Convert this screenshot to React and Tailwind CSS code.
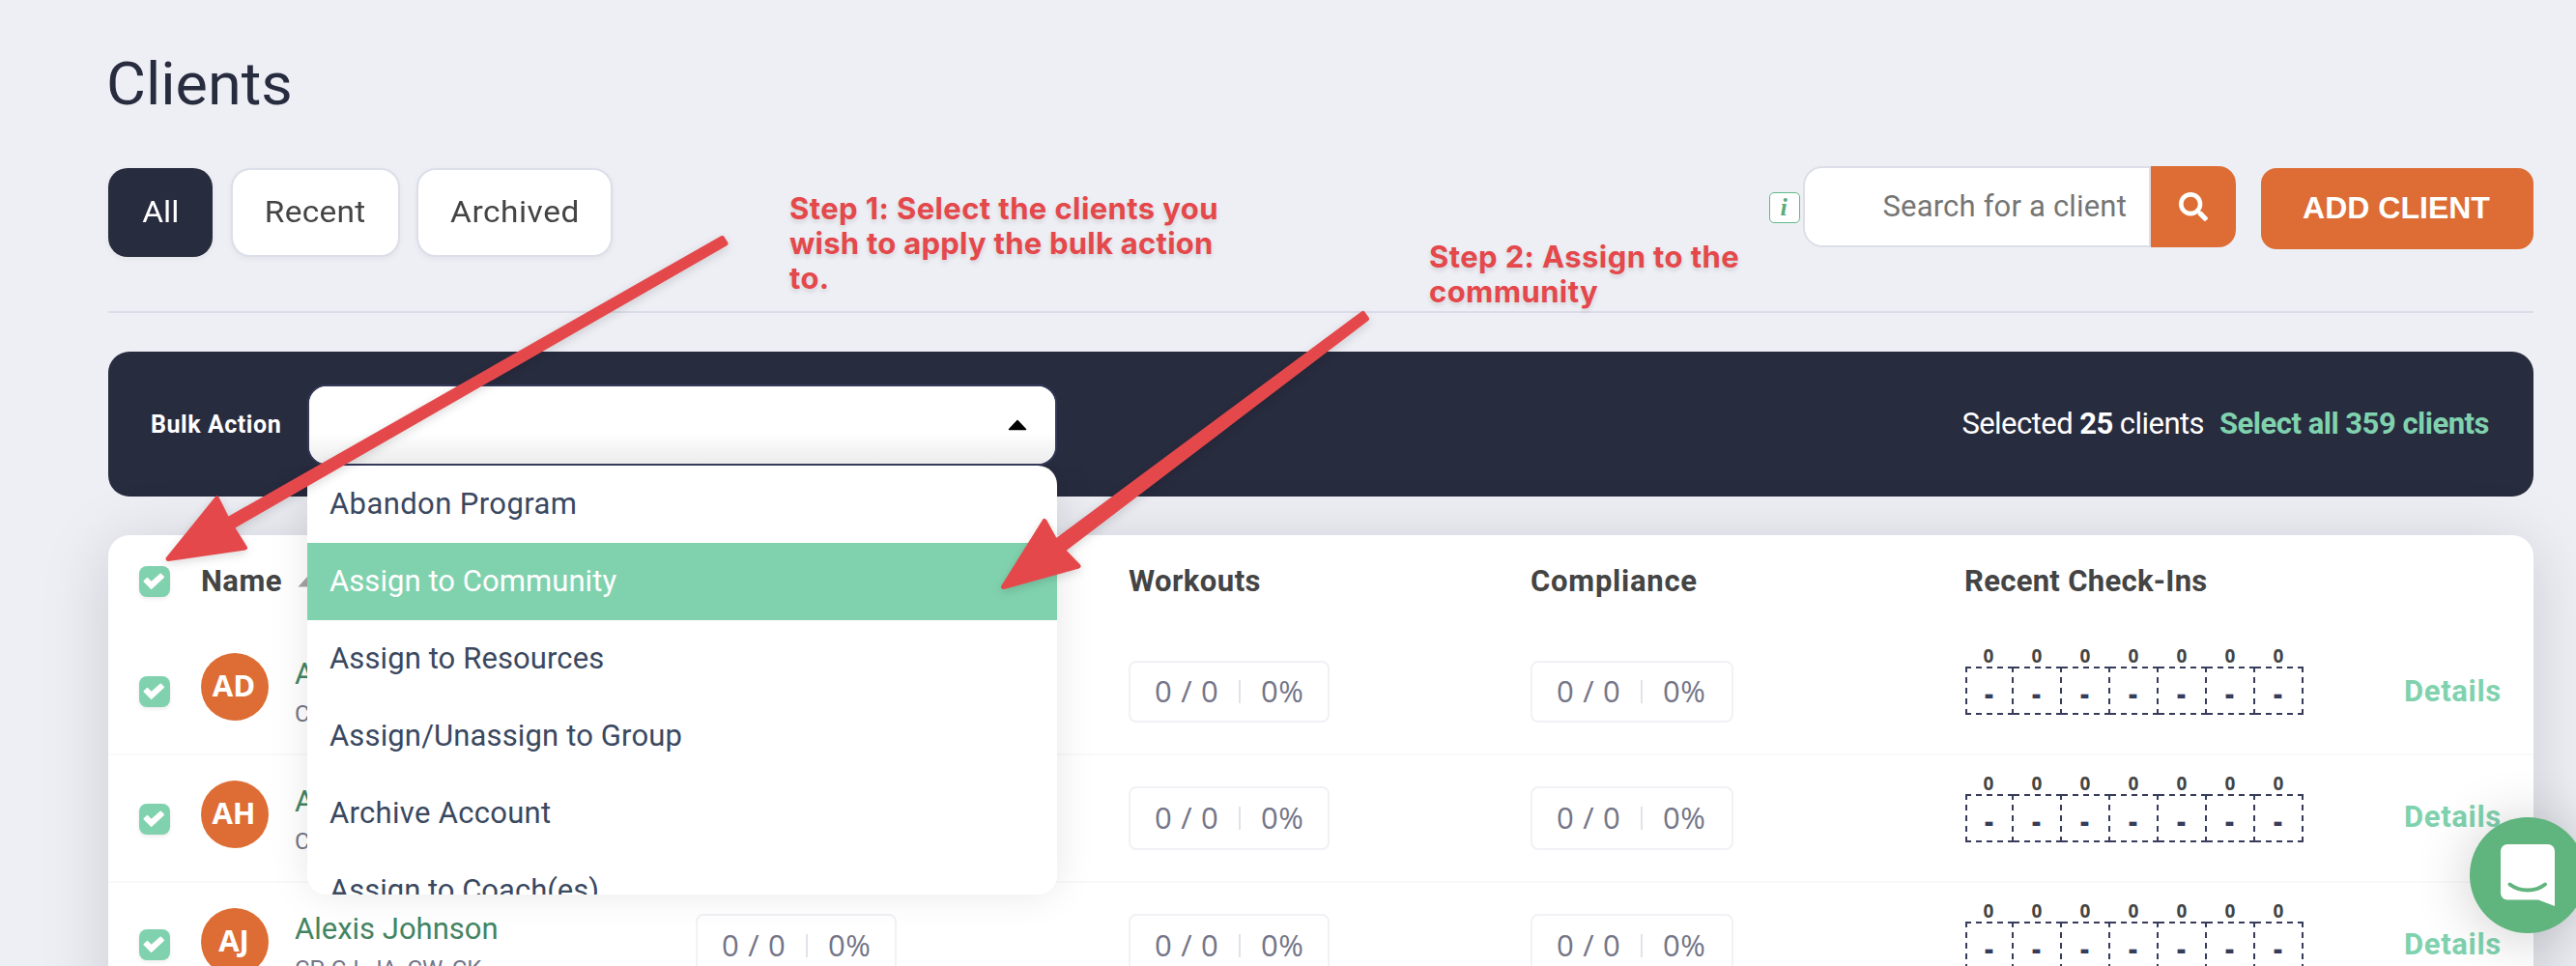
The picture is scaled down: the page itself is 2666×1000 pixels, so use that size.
import React from 'react';

const ROWS = [
  { initials: 'AD', name: 'A', coaches: 'C', check: 'mt-[50px]', pill: 'mt-[34px] h-[64px]', details: 'mt-[48px]' },
  { initials: 'AH', name: 'A', coaches: 'C', check: 'mt-[50px]', pill: 'mt-[32px] h-[66px]', details: 'mt-[46px]' },
  { initials: 'AJ', name: 'Alexis Johnson', coaches: 'CP, CJ, JA, CW, CK', check: 'mt-[48px]', pill: 'mt-[32px] h-[66px]', details: 'mt-[46px]' },
];

const ACTIONS = [
  { label: 'Abandon Program', track: 'tracking-[0.4px]' },
  { label: 'Assign to Community', track: 'tracking-[0.06px]', active: true },
  { label: 'Assign to Resources', track: 'tracking-[0.1px]' },
  { label: 'Assign/Unassign to Group', track: 'tracking-[0.14px]' },
  { label: 'Archive Account', track: 'tracking-[0.3px]' },
  { label: 'Assign to Coach(es)', track: 'tracking-[0px]' },
];

const COLS = 'grid grid-cols-[96px_512px_448px_416px_450px_456px_1fr]';

function Tab({ children, active, className }) {
  return (
    <button
      className={`flex h-[92px] items-center justify-center rounded-[20px] pb-[2px] text-[32px] shadow-[0_2px_6px_rgba(0,0,0,0.05)] ${
        active ? 'bg-[#282c3f] text-white' : 'border-2 border-[#dcdee9] bg-white text-[#444444]'
      } ${className}`}
    >
      <span className="inline-block scale-x-[1.045]">{children}</span>
    </button>
  );
}

function Checkbox({ className = '' }) {
  return (
    <div className={`h-8 w-8 rounded-[8px] bg-[#80d2ae] shadow-[0_2px_4px_rgba(0,0,0,0.08)] ${className}`}>
      <svg width="32" height="32" viewBox="0 0 32 32" fill="#fff" stroke="#fff" strokeWidth="1.6" strokeLinejoin="round">
        <path d="M5.200 15.800L8.300 12.700L12.600 16.800L22.200 8.300L25.200 11.400L12.600 23.200Z" />
      </svg>
    </div>
  );
}

function Pill({ width, className }) {
  return (
    <div className={`flex items-center rounded-[8px] border-2 border-[#f1f1f6] pl-[25px] font-['Open_Sans'] text-[31px] leading-9 text-[#747588] ${width} ${className}`}>
      <span className="w-[87px] -mt-[3px] tracking-[0.7px]">0 / 0</span>
      <span className="h-6 w-[2px] bg-[#e2e2ea]" />
      <span className="ml-[21px] -mt-[3px] tracking-[0.6px]">0%</span>
    </div>
  );
}

function CheckIns() {
  return (
    <div className="flex pt-[19px]">
      {[0, 1, 2, 3, 4, 5, 6].map((i) => (
        <div key={i} className="flex w-[50px] flex-col">
          <div className="flex h-[21px] items-center justify-center pr-[2px] font-['Open_Sans'] text-[19px] font-bold leading-none text-[#444444]">0</div>
          <div
            className={`flex h-[50px] items-center justify-center border-2 border-dashed border-[#373c5b] pr-[1px] pt-[3px] font-['Open_Sans'] text-[28px] font-extrabold leading-none text-[#373c5b] ${
              i ? 'border-l-0' : ''
            }`}
          >
            -
          </div>
        </div>
      ))}
    </div>
  );
}

function ClientRow({ row }) {
  return (
    <div className={`${COLS} h-[132px] items-start border-b-2 border-[#f9f9fb]`}>
      <div className="pl-8">
        <Checkbox className={row.check} />
      </div>
      <div className="flex">
        <div className="mt-[26px] flex h-[70px] w-[70px] items-center justify-center rounded-full bg-[#dd6d34] pb-[3px] pr-[2px] font-['Open_Sans'] text-[31px] font-bold leading-none text-white">
          {row.initials}
        </div>
        <div className="ml-[27px] mt-[30px]">
          <div className="h-9 text-[31px] leading-9 text-[#448463]">{row.name}</div>
          <div className="mt-2 h-[30px] text-[24px] leading-[30px] text-[#747588]">{row.coaches}</div>
        </div>
      </div>
      <Pill width="w-[208px]" className={row.pill} />
      <Pill width="w-[208px]" className={row.pill} />
      <Pill width="w-[210px]" className={row.pill} />
      <CheckIns />
      <div className={`-ml-[2px] h-9 text-[31px] font-bold leading-9 tracking-[0.65px] text-[#80d2ae] ${row.details}`}>Details</div>
    </div>
  );
}

function BulkActionMenu() {
  return (
    <div className="absolute left-[-2px] top-[82px] z-10 h-[444px] w-[776px] overflow-hidden rounded-[20px] bg-white text-[31px] text-[#3a4860]">
      {ACTIONS.map((a) => (
        <div key={a.label} className={`flex h-20 items-center pl-[23px] ${a.track} ${a.active ? 'bg-[#80d2ae] text-white' : ''}`}>
          {a.label}
        </div>
      ))}
    </div>
  );
}

function Arrows() {
  return (
    <svg
      className="pointer-events-none absolute left-0 top-0 z-20 drop-shadow-[0_3px_5px_rgba(0,0,0,0.14)]"
      width="2666"
      height="1000"
      viewBox="0 0 2666 1000"
      fill="#e4484b"
      stroke="#e4484b"
      strokeWidth="5"
      strokeLinejoin="round"
    >
      <path d="M174 578.5L224.5 516L235.5 538L747.5 246.5L751 252L240 545.5L253.5 567Z" />
      <path d="M1038.5 607.5L1081 539.5L1092.5 560.5L1410.5 324.5L1414.500 330L1100 569.500L1116 586Z" />
    </svg>
  );
}

export default function App() {
  return (
    <div className="relative h-[1000px] w-[2666px] overflow-hidden bg-[#eeeff5] pl-[112px] pr-[44px] pt-[54px] font-[Roboto,sans-serif]">
      <h1 className="-ml-[2px] h-[68px] origin-left scale-x-[1.04] text-[60.5px] leading-[68px] text-[#282c3f]">Clients</h1>

      <div className="mt-[52px] flex h-[92px] items-start">
        <Tab active className="w-[108px]">All</Tab>
        <Tab className="ml-[19px] w-[175px] tracking-[0.3px]">Recent</Tab>
        <Tab className="ml-[17px] w-[203px] tracking-[0.5px]">Archived</Tab>

        <div className="ml-auto mr-[3px] mt-[25px] flex h-8 w-8 items-center justify-center self-start rounded-[5px] border-[1.5px] border-[#60b888] bg-white pr-[2px] font-['Liberation_Serif'] text-[26px] font-bold italic leading-none text-[#5aac7c]">
          i
        </div>
        <div className="-mt-[2px] flex h-[84px]">
          <div className="flex w-[360px] items-center justify-end rounded-l-[20px] border-2 border-[#dcdee9] bg-white pr-[23px] text-[31px] tracking-[0.18px] text-[#757575]">
            Search for a client
          </div>
          <div className="flex w-[88px] items-center justify-center rounded-r-[18px] bg-[#dd6d34]">
            <svg width="30" height="30" viewBox="0 0 512 512" fill="#fff">
              <path d="M505 442.700L405.300 343c-4.500-4.500-10.600-7-17-7H372c27.600-35.300 44-79.700 44-128C416 93.100 322.900 0 208 0S0 93.100 0 208s93.100 208 208 208c48.300 0 92.700-16.400 128-44v16.300c0 6.400 2.500 12.500 7 17l99.700 99.700c9.400 9.400 24.600 9.400 33.900 0l28.300-28.300c9.400-9.400 9.400-24.600.1-34zM208 336c-70.700 0-128-57.200-128-128 0-70.700 57.200-128 128-128 70.700 0 128 57.200 128 128 0 70.700-57.200 128-128 128z" />
            </svg>
          </div>
        </div>
        <button className="ml-[26px] flex h-[84px] w-[282px] items-center justify-center rounded-[16px] bg-[#dd6d34] pb-[2px] pr-[2px] font-['Liberation_Sans'] text-[32px] font-bold text-white">
          ADD CLIENT
        </button>
      </div>

      <div className="mt-[56px] h-[2px] bg-[#dadce8]" />

      <div className="mt-[40px] flex h-[150px] items-center rounded-[22px] bg-[#282c3f] pl-[44px] text-white">
        <div className="w-[162px] pt-[2px] text-[25px] font-bold tracking-[0.55px]">Bulk Action</div>
        <div className="relative z-10 mt-[2px] h-[84px] w-[776px] rounded-[20px] border-2 border-[#35395a] bg-white">
          <div className="flex h-full items-center justify-end overflow-hidden rounded-[18px] bg-gradient-to-t from-[#ececec] via-white via-40% to-white pr-[29px]">
            <svg width="20" height="12" viewBox="0 0 20 12">
              <path d="M10 1.500L18.500 10.500H1.500Z" fill="#000" stroke="#000" strokeWidth="1.500" strokeLinejoin="round" />
            </svg>
          </div>
          <div className="absolute left-[-2px] top-[82px] h-[444px] w-[776px] rounded-[20px] shadow-[0_-2px_40px_rgba(0,0,0,0.10)] [clip-path:inset(0_-60px_-60px_-60px)]" />
          <BulkActionMenu />
        </div>
        <div className="ml-auto mr-[46px] flex pt-[1px] text-[31px]">
          <span className="tracking-[-0.55px]">
            Selected <b>25</b> clients
          </span>
          <span className="ml-[16px] font-bold tracking-[-0.5px] text-[#80d2ae]">Select all 359 clients</span>
        </div>
      </div>

      <div className="mt-[40px] h-[600px] rounded-[22px] bg-white shadow-[0_10px_70px_rgba(10,10,20,0.15)]">
        <div className={`${COLS} h-24 items-center text-[31px] font-bold text-[#444444]`}>
          <div className="pl-8">
            <Checkbox />
          </div>
          <div className="flex items-center">
            <span className="tracking-[0.5px]">Name</span>
            <svg width="20" height="12" viewBox="0 0 20 12" className="ml-[16px]">
              <path d="M10 1L19.500 11.500H0.500Z" fill="#a3a3a3" />
            </svg>
          </div>
          <div />
          <div className="tracking-[0.45px]">Workouts</div>
          <div className="tracking-[0.75px]">Compliance</div>
          <div className="-ml-px tracking-[0.3px]">Recent Check-Ins</div>
        </div>
        {ROWS.map((r) => (
          <ClientRow key={r.initials} row={r} />
        ))}
      </div>

      <Arrows />

      <div className="absolute left-[817px] top-[198px] z-20 w-[470px] font-[Inter] text-[31px] font-bold leading-9 tracking-[0.4px] text-[#e4484b] [text-shadow:0_3px_5px_rgba(0,0,0,0.12)]">
        Step 1: Select the clients you
        <br />
        <span className="tracking-[0.25px]">wish to apply the bulk action</span>
        <br />
        to.
      </div>
      <div className="absolute left-[1479px] top-[248px] z-20 w-[340px] font-[Inter] text-[31px] font-bold leading-9 tracking-[0.4px] text-[#e4484b] [text-shadow:0_3px_5px_rgba(0,0,0,0.12)]">
        Step 2: Assign to the
        <br />
        community
      </div>

      <div className="absolute left-[2556px] top-[846px] z-20 flex h-[120px] w-[120px] items-center justify-center rounded-full bg-[#60b47d] shadow-[0_4px_60px_rgba(0,0,0,0.2)]">
        <svg width="56" height="64" viewBox="0 0 56 64" fill="none">
          <path d="M7 0H49a7 7 0 0 1 7 7V64L39 57.500H7a7 7 0 0 1-7-7V7a7 7 0 0 1 7-7Z" fill="#fff" />
          <path d="M9.500 41.500C20 49.500 36 49.500 46 41.500" stroke="#60b47d" strokeWidth="4" strokeLinecap="round" />
        </svg>
      </div>
    </div>
  );
}
